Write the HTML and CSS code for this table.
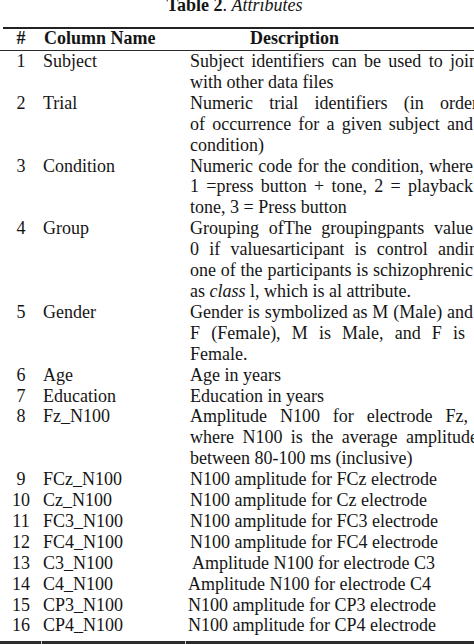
FILE: index.html
```html
<!DOCTYPE html>
<html lang="en">
<head>
<meta charset="utf-8">
<title>Table 2. Attributes</title>
<link rel="stylesheet" href="styles.css">
</head>
<body>
<div class="page">
  <p class="caption"><b>Table 2</b>. <i>Attributes</i></p>
  <div class="rule-top"></div>
  <div class="row head">
    <div class="num">#</div>
    <div class="name">Column Name</div>
    <div class="desc">Description</div>
  </div>
  <div class="body">
    <div class="row">
      <div class="num">1</div>
      <div class="name">Subject</div>
      <div class="desc"><span class="ln j over">Subject identifiers can be used to join</span><span class="ln">with other data files</span></div>
    </div>
    <div class="row">
      <div class="num">2</div>
      <div class="name">Trial</div>
      <div class="desc"><span class="ln j over">Numeric trial identifiers (in order</span><span class="ln j">of occurrence for a given subject and</span><span class="ln">condition)</span></div>
    </div>
    <div class="row">
      <div class="num">3</div>
      <div class="name">Condition</div>
      <div class="desc"><span class="ln j">Numeric code for the condition, where</span><span class="ln j">1 =press button + tone, 2 = playback</span><span class="ln">tone, 3 = Press button</span></div>
    </div>
    <div class="row">
      <div class="num">4</div>
      <div class="name">Group</div>
      <div class="desc"><span class="ln j">Grouping ofThe groupingpants value</span><span class="ln j over">0 if valuesarticipant is control andin</span><span class="ln j">one of the participants is schizophrenic</span><span class="ln">as <i>class</i> l, which is al attribute.</span></div>
    </div>
    <div class="row">
      <div class="num">5</div>
      <div class="name">Gender</div>
      <div class="desc"><span class="ln j">Gender is symbolized as M (Male) and</span><span class="ln j short-9">F (Female), M is Male, and F is</span><span class="ln">Female.</span></div>
    </div>
    <div class="row">
      <div class="num">6</div>
      <div class="name">Age</div>
      <div class="desc"><span class="ln">Age in years</span></div>
    </div>
    <div class="row">
      <div class="num">7</div>
      <div class="name">Education</div>
      <div class="desc"><span class="ln">Education in years</span></div>
    </div>
    <div class="row">
      <div class="num">8</div>
      <div class="name">Fz_N100</div>
      <div class="desc"><span class="ln j short-5">Amplitude N100 for electrode Fz,</span><span class="ln j over">where N100 is the average amplitude</span><span class="ln">between 80-100 ms (inclusive)</span></div>
    </div>
    <div class="row">
      <div class="num">9</div>
      <div class="name">FCz_N100</div>
      <div class="desc"><span class="ln">N100 amplitude for FCz electrode</span></div>
    </div>
    <div class="row">
      <div class="num">10</div>
      <div class="name">Cz_N100</div>
      <div class="desc"><span class="ln">N100 amplitude for Cz electrode</span></div>
    </div>
    <div class="row">
      <div class="num">11</div>
      <div class="name">FC3_N100</div>
      <div class="desc"><span class="ln">N100 amplitude for FC3 electrode</span></div>
    </div>
    <div class="row">
      <div class="num">12</div>
      <div class="name">FC4_N100</div>
      <div class="desc"><span class="ln">N100 amplitude for FC4 electrode</span></div>
    </div>
    <div class="row">
      <div class="num">13</div>
      <div class="name">C3_N100</div>
      <div class="desc desc-right"><span class="ln">Amplitude N100 for electrode C3</span></div>
    </div>
    <div class="row">
      <div class="num">14</div>
      <div class="name">C4_N100</div>
      <div class="desc desc-left"><span class="ln">Amplitude N100 for electrode C4</span></div>
    </div>
    <div class="row">
      <div class="num">15</div>
      <div class="name">CP3_N100</div>
      <div class="desc desc-left"><span class="ln">N100 amplitude for CP3 electrode</span></div>
    </div>
    <div class="row">
      <div class="num">16</div>
      <div class="name">CP4_N100</div>
      <div class="desc desc-left"><span class="ln">N100 amplitude for CP4 electrode</span></div>
    </div>
  </div>
  <div class="row foot">
    <div class="bar"></div>
    <div class="bar"></div>
    <div class="bar"></div>
  </div>
</div>
</body>
</html>
```

FILE: styles.css
```css
html, body {
  margin: 0;
  padding: 0;
  background: #ffffff;
}

body {
  width: 474px;
  height: 644px;
  overflow: hidden;
  font-family: "Liberation Serif", "Times New Roman", serif;
  font-size: 18px;
  color: #151515;
}

.page {
  width: 474px;
}

.caption {
  margin: -5px 0 11px 0;
  padding-right: 5px;
  line-height: 21px;
  text-align: center;
  white-space: nowrap;
}

.caption b {
  font-weight: bold;
}

.rule-top {
  height: 2px;
  margin-left: 3px;
  background: #222222;
}

.row {
  display: grid;
  grid-template-columns: 42px 143px 288px;
}

.num {
  text-align: center;
}

.name {
  padding-left: 2px;
  white-space: nowrap;
}

.desc {
  padding-left: 5px;
}

.head {
  font-weight: bold;
  line-height: 18px;
  padding-bottom: 3px;
  border-bottom: 1px solid #2a2a2a;
}

.head .desc {
  padding-left: 65px;
  white-space: nowrap;
}

.body {
  line-height: 20.9px;
  padding-bottom: 5px;
}

.body .name {
  padding-left: 1px;
}

.ln {
  display: block;
  white-space: nowrap;
}

.ln.j {
  white-space: normal;
  text-align: justify;
  text-align-last: justify;
}

.ln.over {
  margin-right: -5px;
}

.ln.short-9 {
  margin-right: 8px;
}

.ln.short-5 {
  margin-right: 5px;
}

.desc-right {
  padding-left: 7px;
}

.desc-left {
  padding-left: 3px;
}

.foot {
  column-gap: 1px;
  background: #c8c8c8;
  height: 4px;
  grid-template-columns: 41px 143px 1fr;
}

.bar {
  background: #2c2c2c;
}
```
